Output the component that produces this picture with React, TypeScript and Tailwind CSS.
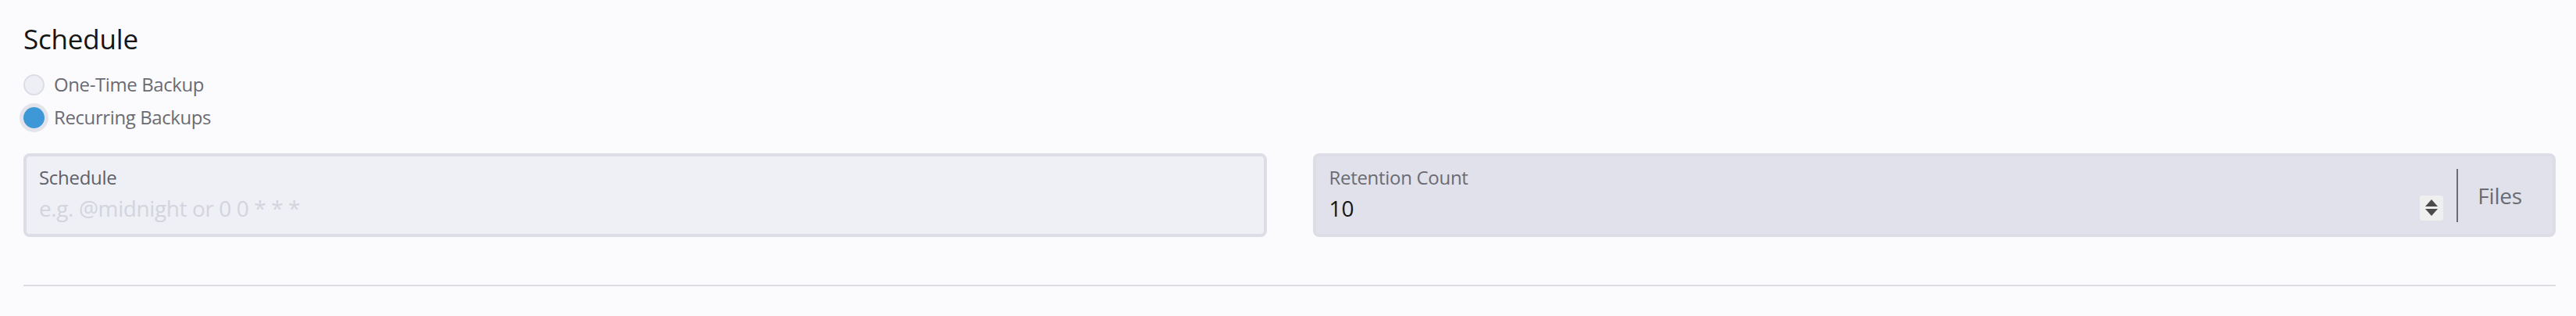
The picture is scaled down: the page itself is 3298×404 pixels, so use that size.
import React from "react";

export default function App() {
  return (
    <div
      className="min-h-[404px] w-full bg-[#fbfbfd] pl-[30px] pr-[26px] pt-[28px]"
      style={{ fontFamily: '"Open Sans", "Noto Sans", sans-serif' }}
    >
      <h2 className="text-[35px] leading-[44px] font-normal tracking-[-0.2px] text-[#151515]">Schedule</h2>

      <div className="mt-[15px] flex flex-col">
        <label className="flex h-[42px] items-center gap-[12px]">
          <span className="box-border h-[27px] w-[27px] rounded-full border-2 border-[#dcdde6] bg-[#eeeff4]" />
          <span className="text-[24px] leading-[32px] tracking-[-0.4px] text-[#6a6b73]">One-Time Backup</span>
        </label>
        <label className="flex h-[42px] items-center gap-[12px]">
          <span className="box-border h-[27px] w-[27px] rounded-full bg-[#3e98d7] ring-[5px] ring-[#e3e4eb]" />
          <span className="text-[24px] leading-[32px] tracking-[-0.4px] text-[#6a6b73]">Recurring Backups</span>
        </label>
      </div>

      <div className="mt-[25px] grid grid-cols-2 gap-[59px]">
        <div className="box-border h-[107px] rounded-[8px] border-4 border-[#dcdde6] bg-[#eff0f5] pl-[16px] pt-[13px]">
          <div className="text-[24px] leading-[28px] tracking-[-0.3px] text-[#5f6068]">Schedule</div>
          <div className="mt-[7px] text-[28px] leading-[36px] tracking-[-0.4px] text-[#d3d4de]">e.g. @midnight or 0 0 * * *</div>
        </div>

        <div className="box-border flex h-[107px] items-center rounded-[8px] border-4 border-[#dcdde6] bg-[#e0e1ea] pr-[39px]">
          <div className="flex-1 self-start pl-[17px] pt-[13px]">
            <div className="text-[24px] leading-[28px] tracking-[-0.3px] text-[#6a6b73]">Retention Count</div>
            <div className="mt-[7px] text-[28px] leading-[36px] text-[#151515]">10</div>
          </div>
          <div className="mt-[32px] flex h-[32px] w-[30px] flex-col items-center justify-center gap-[3px] rounded-[3px] bg-[#efefef]">
            <svg width="16" height="9" viewBox="0 0 16 9">
              <polygon points="8,0 16,9 0,9" fill="#4b4b4b" />
            </svg>
            <svg width="16" height="9" viewBox="0 0 16 9">
              <polygon points="0,0 16,0 8,9" fill="#4b4b4b" />
            </svg>
          </div>
          <div className="ml-[17px] h-[68px] w-[2px] bg-[#6a6b73]" />
          <div className="ml-[25px] text-[28px] leading-[36px] tracking-[-0.2px] text-[#6a6b73]">Files</div>
        </div>
      </div>

      <div className="mt-[61px] h-[2px] w-full bg-[#dcdde3]" />
    </div>
  );
}
